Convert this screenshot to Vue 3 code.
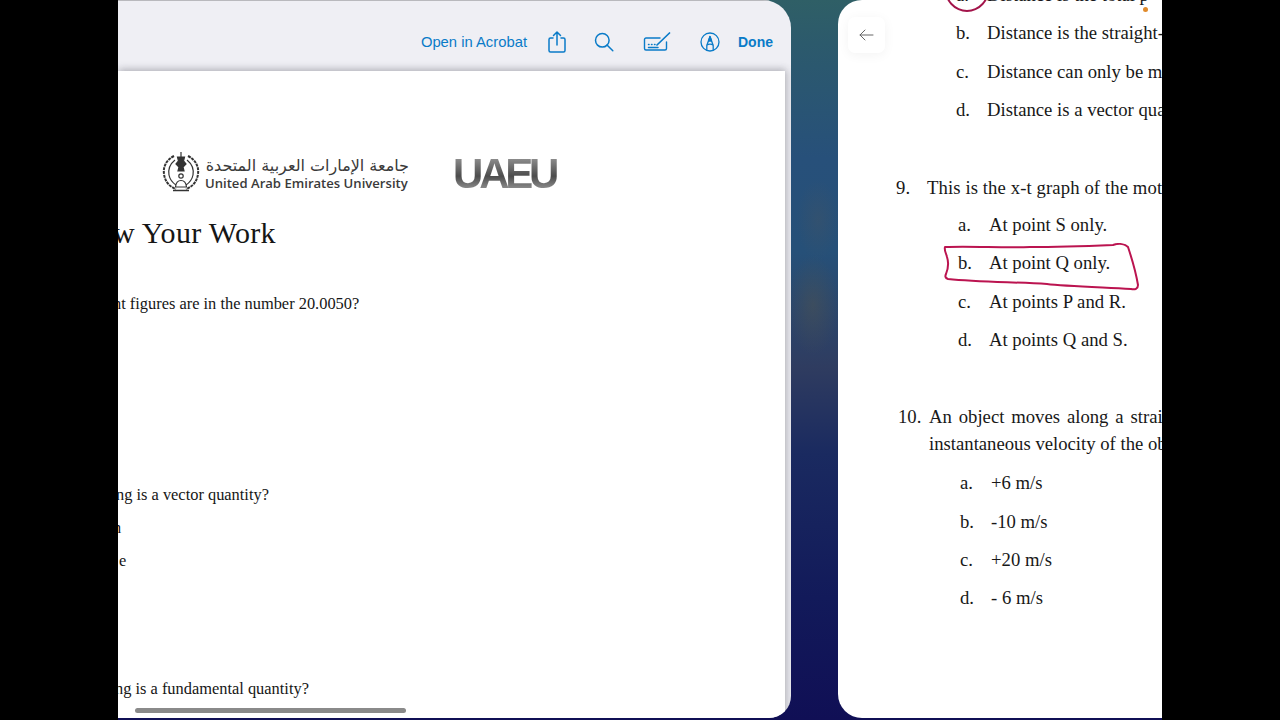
<script setup>
const groupA = [
  { l: 'b.', t: 'Distance is the straight-' },
  { l: 'c.', t: 'Distance can only be m' },
  { l: 'd.', t: 'Distance is a vector qua' }
]
const groupB = [
  { l: 'a.', t: 'At point S only.' },
  { l: 'b.', t: 'At point Q only.' },
  { l: 'c.', t: 'At points P and R.' },
  { l: 'd.', t: 'At points Q and S.' }
]
const groupC = [
  { l: 'a.', t: '+6 m/s' },
  { l: 'b.', t: '-10 m/s' },
  { l: 'c.', t: '+20 m/s' },
  { l: 'd.', t: '- 6 m/s' }
]
</script>

<template>
  <div class="screen">
    <div class="stage">
      <section class="win left">
        <header class="toolbar">
          <span class="acrobat">Open in Acrobat</span>
          <svg class="ic share" width="20" height="24" viewBox="0 0 20 24" fill="none" stroke="#0a7bc8" stroke-width="1.5" stroke-linecap="round" stroke-linejoin="round">
            <path d="M6 8H3.5A1.5 1.5 0 0 0 2 9.5V20.5A1.5 1.5 0 0 0 3.5 22H16.5A1.5 1.5 0 0 0 18 20.5V9.5A1.5 1.5 0 0 0 16.5 8H14"/>
            <path d="M10 15V2M6.5 5.5L10 2L13.5 5.5"/>
          </svg>
          <svg class="ic search" width="20" height="20" viewBox="0 0 20 20" fill="none" stroke="#0a7bc8" stroke-width="1.5" stroke-linecap="round">
            <circle cx="8.3" cy="8.3" r="6.8"/>
            <path d="M13 13L18.8 18.8"/>
          </svg>
          <svg class="ic keys" width="28" height="20" viewBox="0 0 28 20" fill="none" stroke="#0a7bc8" stroke-width="1.4" stroke-linecap="round" stroke-linejoin="round">
            <path d="M17 6H3A1.5 1.5 0 0 0 1.5 7.5V16.5A1.5 1.5 0 0 0 3 18H22A1.5 1.5 0 0 0 23.5 16.5V10"/>
            <path d="M14 13L26.5 1" stroke-width="1.7"/>
            <path d="M5.5 12.5H6M8.5 12.5H9M11.5 12.5H12M5.5 15.5H15" stroke-width="1.5"/>
          </svg>
          <svg class="ic markup" width="20" height="20" viewBox="0 0 20 20" fill="none" stroke="#0a7bc8" stroke-width="1.3" stroke-linejoin="round">
            <circle cx="10" cy="10" r="9"/>
            <path d="M6.8 18.3V13.5L10 4.5L13.2 13.5V18.3"/>
            <path d="M7 13C8.5 11.8 11.5 11.8 13 13"/>
            <path d="M8.5 9L10 4.5L11.5 9Z" fill="#0a7bc8"/>
          </svg>
          <span class="done">Done</span>
        </header>
        <div class="paper">
          <div class="brand">
            <svg class="seal" width="38" height="42" viewBox="0 0 38 42" fill="none" stroke="#333" stroke-width="1.2">
              <path d="M12 5C4 9 1 16 2 23C3 31 8 36 14 38" stroke-width="2" stroke-dasharray="3 0.8"/>
              <path d="M26 5C34 9 37 16 36 23C35 31 30 36 24 38" stroke-width="2" stroke-dasharray="3 0.8"/>
              <path d="M13 9C8 13 6 18 7 24C8 29 11 32 14 34"/>
              <path d="M25 9C30 13 32 18 31 24C30 29 27 32 24 34"/>
              <path d="M19 1V6M15.5 6H22.5L21.5 10L24 13L21 16L22 20H16L17 16L14 13L16.5 10Z" fill="#333"/>
              <circle cx="19" cy="25" r="2.2"/>
              <path d="M13.5 36C14 31 17 29.5 19 29.5C21 29.5 24 31 24.5 36Z"/>
              <path d="M11 39.5H27" stroke-width="1.5"/>
            </svg>
            <div class="brand-names">
              <div class="arabic" dir="rtl">جامعة الإمارات العربية المتحدة</div>
              <div class="uni">United Arab Emirates University</div>
            </div>
            <div class="uaeu">UAEU</div>
          </div>
          <h1 class="title">w Your Work</h1>
          <p class="q q1">nt figures are in the number 20.0050?</p>
          <p class="q q2">ng is a vector quantity?</p>
          <p class="q o1">n</p>
          <p class="q o2">e</p>
          <p class="q q3">ng is a fundamental quantity?</p>
          <div class="scrollbar"></div>
        </div>
      </section>

      <section class="win right">
        <button class="back" type="button" aria-label="Back">
          <svg width="15" height="12" viewBox="0 0 15 12" fill="none" stroke="#666" stroke-width="1" stroke-linecap="round" stroke-linejoin="round">
            <path d="M14 6H1M6 1L1 6L6 11"/>
          </svg>
        </button>
        <div class="sheet">
          <div class="ring-top"></div>
          <span class="dot"></span>
          <div class="line a"><span class="lab">a.</span><span>Distance is the total p</span></div>
          <div v-for="o in groupA" :key="o.l" class="line a"><span class="lab">{{ o.l }}</span><span>{{ o.t }}</span></div>
          <div class="qline n9"><span class="num">9.</span><span>This is the x-t graph of the mot</span></div>
          <div v-for="o in groupB" :key="o.l" class="line b">
            <span class="lab">{{ o.l }}</span><span>{{ o.t }}</span>
            <svg v-if="o.l === 'b.'" class="circle" width="198" height="50" viewBox="0 0 198 50" fill="none" stroke="#bb1450" stroke-width="2" stroke-linecap="round" stroke-linejoin="round">
              <path d="M2 4C30 3 60 5 87 4C115 4 145 3 170 2C176 0 182 1 185 4C189 16 193 30 195 42C195 46 192 47 188 46C150 44 120 43 104 41C70 39 35 39 5 36C2 35 2 33 3 31C5 26 6 20 4 14C3 10 1 7 2 4Z"/>
            </svg>
          </div>
          <div class="qline n10"><span class="num">10.</span><span class="spread">An object moves along a strai</span></div>
          <div class="qline cont"><span class="num"></span><span>instantaneous velocity of the ob</span></div>
          <div class="gap-c"></div>
          <div v-for="o in groupC" :key="o.l" class="line c"><span class="lab">{{ o.l }}</span><span>{{ o.t }}</span></div>
        </div>
      </section>
    </div>
  </div>
</template>

<style>
html, body { margin: 0; background: #000; }
</style>

<style scoped>
.screen {
  width: 1280px;
  height: 720px;
  background: #000;
  display: flex;
  justify-content: center;
  overflow: hidden;
}
.stage {
  width: 1044px;
  height: 720px;
  display: flex;
  gap: 47px;
  overflow: hidden;
  background:
    radial-gradient(ellipse 26px 50px at 695px 305px, rgba(85,85,75,.42), transparent),
    radial-gradient(ellipse 22px 40px at 700px 220px, rgba(85,85,85,.25), transparent),
    linear-gradient(180deg, #2f5f66 0%, #2c5a6c 6%, #27507a 22%, #265078 35%, #2f3c60 51%, #1a2a60 63%, #121a5a 83%, #100f55 100%);
}
.win { overflow: hidden; height: 718px; position: relative; }
.left {
  width: 673px;
  background: #efeff4;
  border-radius: 0 28px 22px 0;
  display: flex;
  flex-direction: column;
  box-sizing: border-box;
}
.toolbar {
  height: 71px;
  flex: none;
  display: flex;
  align-items: center;
  padding: 12px 18px 0 0;
  box-sizing: border-box;
  justify-content: flex-end;
  color: #0a7bc8;
  font-family: "Liberation Sans", Arial, sans-serif;
  font-size: 14px;
  border-top: 1px solid #b9b9bd;
}
.acrobat { font-size: 14.8px; }
.ic { flex: none; }
.share { margin-left: 20px; margin-top: -1px; }
.search { margin-left: 27px; }
.keys { margin-left: 29px; }
.markup { margin-left: 29px; }
.done { margin-left: 18px; font-weight: 700; }
.paper {
  flex: 1;
  width: 667px;
  background: #fff;
  box-shadow: 0 -2px 7px rgba(70,70,80,.26), 3px 0 8px rgba(90,90,100,.2);
  position: relative;
  font-family: "Liberation Serif", "Times New Roman", serif;
  color: #161616;
  display: flex;
  flex-direction: column;
  overflow: hidden;
}
.brand {
  display: flex;
  align-items: center;
  margin: 80px 0 0 44px;
  height: 42px;
}
.seal { flex: none; }
.brand-names { margin-left: 5px; width: 204px; padding-top: 5px; }
.arabic {
  font-family: "DejaVu Sans", sans-serif;
  font-size: 16px;
  line-height: 18px;
  color: #3a3a3a;
  white-space: nowrap;
}
.uni {
  font-family: "Open Sans", sans-serif;
  font-weight: 600;
  font-size: 13.1px;
  line-height: 17px;
  color: #3a3a3a;
  white-space: nowrap;
}
.uaeu {
  margin: 4px 0 0 44px;
  padding-right: 4px;
  font-family: "Liberation Sans", sans-serif;
  font-weight: 700;
  font-size: 42px;
  line-height: 42px;
  letter-spacing: -4.2px;
  background: linear-gradient(180deg, #8a8a8a 15%, #4c4c4c 55%, #8c8c8c 85%);
  -webkit-background-clip: text;
  background-clip: text;
  color: transparent;
}
.title {
  margin: 23px 0 0 -5px;
  font-size: 30px;
  line-height: 34px;
  font-weight: 400;
  letter-spacing: 0.3px;
  white-space: nowrap;
}
.q {
  margin: 0;
  font-size: 16.4px;
  line-height: 20px;
  white-space: nowrap;
}
.q1 { margin: 44px 0 0 -5px; }
.q2 { margin: 171px 0 0 -2px; }
.o1 { margin: 13px 0 0 -5px; }
.o2 { margin: 13px 0 0 1px; }
.q3 { margin: 108px 0 0 -3px; }
.scrollbar {
  position: absolute;
  left: 17px;
  bottom: 5px;
  width: 271px;
  height: 5px;
  border-radius: 3px;
  background: #8a8a8a;
}
.right {
  width: 324px;
  background: #fff;
  border-radius: 24px 0 0 24px;
  font-family: "Liberation Serif", "Times New Roman", serif;
  color: #181818;
}
.back {
  position: absolute;
  left: 10px;
  top: 17px;
  width: 37px;
  height: 36px;
  border: 0;
  padding: 0;
  border-radius: 7px;
  background: #fff;
  box-shadow: 0 2px 12px rgba(0,0,0,.05);
  display: flex;
  align-items: center;
  justify-content: center;
}
.sheet {
  position: relative;
  margin-top: -24px;
  white-space: nowrap;
  font-size: 18.7px;
}
.ring-top {
  position: absolute;
  left: 106px;
  top: -14px;
  width: 46px;
  height: 50px;
  border: 2px solid #a3144a;
  border-radius: 50%;
  box-sizing: border-box;
}
.dot {
  position: absolute;
  left: 305px;
  top: 31px;
  width: 5px;
  height: 5px;
  border-radius: 50%;
  background: #e08a2a;
}
.line {
  display: grid;
  grid-template-columns: 31px auto;
  justify-content: start;
  height: 38.3px;
  line-height: 38.3px;
  position: relative;
}
.a { margin-left: 118px; }
.b { margin-left: 120px; }
.c { margin-left: 122px; }
.qline {
  display: grid;
  grid-template-columns: 31px auto;
  height: 27px;
  line-height: 27px;
  margin-left: 58px;
}
.n9 { margin-top: 45px; letter-spacing: 0.1px; }
.n9 + .line { margin-top: 5px; }
.n10 { margin-top: 44px; margin-left: 60px; }
.spread { word-spacing: 2.2px; }
.cont { margin-left: 60px; }
.gap-c { height: 7px; }
.circle {
  position: absolute;
  left: -15px;
  top: -1px;
  pointer-events: none;
}
</style>
